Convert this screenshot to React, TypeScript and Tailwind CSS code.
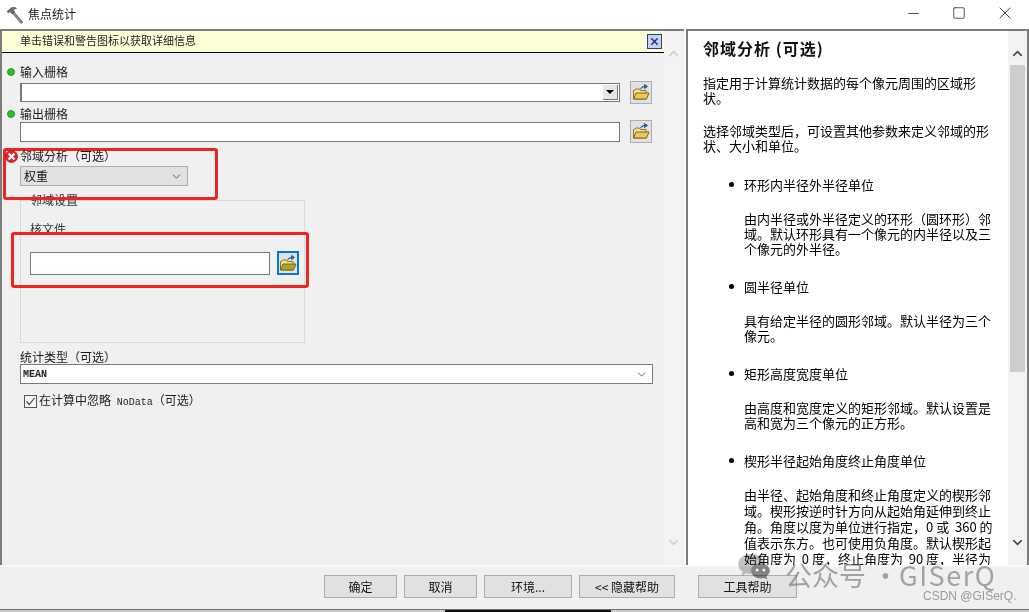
import { ChevronDown, ChevronUp, Minus, Square, X } from 'lucide-react';

const cjk = "font-['Noto_Sans_CJK_SC','Liberation_Sans',sans-serif]";

const Hammer = () => (
    <svg width="18" height="18" viewBox="0 0 18 18">
        <path d="M8 6l9 10-2 1.5L6.5 7.5z" fill="#8a8a8a" stroke="#555" strokeWidth="0.6" />
        <path d="M1 5.5L5.5 1.5h4l1 1-3 1 1 2.5-2.5 2L4 5.5l-1.5 1.5z" fill="#6d6d6d" stroke="#444" strokeWidth="0.5" />
    </svg>
);

const FolderIcon = ({ olive }: { olive?: boolean }) => (
    <svg width="18" height="17" viewBox="0 0 18 17">
        <path d="M1.5 15V6.5h1l1-1.5h4l1 1.5h5.5V15z" fill="#f7e08a" stroke="#7a6a1e" strokeWidth="0.9" />
        <path d="M1.5 15l2.5-6h13l-2.5 6z" fill={olive ? '#aea52c' : '#e9c95a'} stroke="#6b5c17" strokeWidth="0.9" />
        <path d="M8.5 5C9.5 3 11 2.5 13 2.5M12.5 0.5l3 2-3 2z" fill="#1f5fa8" stroke="#1f5fa8" strokeWidth="1" />
    </svg>
);

const FolderButton = ({ active }: { active?: boolean }) => (
    <button
        className={
            active
                ? 'w-[22px] h-[24px] flex items-center justify-center bg-[#e1e1e1] border-2 border-[#0078d7]'
                : 'w-[22px] h-[23px] flex items-center justify-center bg-[#e1e1e1] border border-[#adadad]'
        }
    >
        <FolderIcon olive={active} />
    </button>
);

const GreenDot = () => <span className="ml-[7px] block w-[8px] h-[8px] rounded-full bg-[#22c41e] border border-[#3d8f3a]" />;

const ErrorIcon = () => (
    <svg className="ml-[5px] relative z-[2]" width="13" height="13" viewBox="0 0 14 14">
        <circle cx="7" cy="7" r="6.6" fill="#e3222c" stroke="#8e1a1f" strokeWidth="0.6" />
        <path d="M3.800 3.800l6.400 6.400M10.200 3.800l-6.400 6.400" stroke="#fff" strokeWidth="2.400" />
    </svg>
);

const FieldLabel = ({ icon, children, className }: { icon?: React.ReactNode; children: React.ReactNode; className?: string }) => (
    <div className={`flex items-center h-[14px] text-[12px] leading-[14px] text-[#1a1a1a] ${className ?? ''}`}>
        <span className="w-[20px] shrink-0 flex items-center">{icon}</span>
        <span className="relative z-[1] whitespace-nowrap">{children}</span>
    </div>
);

const ScrollBar = ({ thumb, dark }: { thumb?: boolean; dark?: boolean }) => (
    <div className="w-[19px] shrink-0 h-full bg-[#f3f3f3] flex flex-col items-center">
        <div className="h-[34px] shrink-0 flex items-center justify-center pt-[10px]">
            <ChevronUp size={15} strokeWidth={2.6} className={dark ? 'text-[#4a4a4a]' : 'text-[#cfcfcf]'} />
        </div>
        {thumb && <div className="w-[15px] h-[307px] bg-[#cdcdcd]" />}
        <div className="grow" />
        <div className="h-[30px] shrink-0 flex items-start justify-center">
            <ChevronDown size={15} strokeWidth={2.6} className={dark ? 'text-[#4a4a4a]' : 'text-[#cfcfcf]'} />
        </div>
    </div>
);

const LeftPanel = () => (
    <div className="w-[684px] shrink-0 h-full flex border-l-2 border-t-2 border-[#7c7c7c] bg-[#f0f0f0]">
        <div className="w-[662px] shrink-0 h-full relative">
            <div className="h-[22px] flex items-center justify-between pl-[18px] pr-[2px] bg-[#fdfdd6] border-b border-black text-[11px] leading-[14px] text-[#222]">
                <span className="pb-[3px]">单击错误和警告图标以获取详细信息</span>
                <span className="w-[15px] h-[15px] flex items-center justify-center bg-[#c6d3f5] border border-[#2b3f8c]">
                    <X size={11} strokeWidth={3} className="text-[#1b2a70]" />
                </span>
            </div>
            <div className="pt-[12px] pr-[9px]">
                <FieldLabel icon={<GreenDot />} className="-ml-[2px]">输入栅格</FieldLabel>
                <div className="flex items-center mt-[2px] ml-[18px]">
                    <div className="w-[600px] h-[19px] bg-white border border-[#7a7a7a] border-l-2 flex justify-end items-center pr-[1px]">
                        <span className="w-[15px] h-[15px] bg-[#e6e6e6] border-r border-b border-[#777] flex items-center justify-center">
                            <span className="block w-0 h-0 border-l-[4px] border-r-[4px] border-t-[4px] border-l-transparent border-r-transparent border-t-black" />
                        </span>
                    </div>
                    <span className="ml-[10px]"><FolderButton /></span>
                </div>
                <FieldLabel icon={<GreenDot />} className="-ml-[2px] mt-[3px]">输出栅格</FieldLabel>
                <div className="flex items-center mt-[-1px] ml-[18px]">
                    <div className="w-[600px] h-[20px] bg-white border border-[#7a7a7a]" />
                    <span className="ml-[10px]"><FolderButton /></span>
                </div>
                <FieldLabel icon={<ErrorIcon />} className="-ml-[2px] mt-[6px]">邻域分析（可选）</FieldLabel>
                <div className="mt-[3px] ml-[18px] w-[168px] h-[20px] bg-[#e1e1e1] border border-[#adadad] flex items-center justify-between pl-[3px] pr-[4px] text-[12px] text-[#111]">
                    <span>权重</span>
                    <ChevronDown size={13} strokeWidth={1.5} className="text-[#444]" />
                </div>
                <div className="mt-[14px] ml-[18px] w-[285px] h-[143px] border border-[#d9d9d9] pl-[9px]">
                    <div className="-mt-[8px] text-[12px] leading-[14px] text-[#333]">邻域设置</div>
                    <div className="mt-[15px] text-[12px] leading-[14px] text-[#333]">核文件</div>
                    <div className="flex items-center mt-[15px]">
                        <div className="w-[240px] h-[23px] bg-white border border-[#7a7a7a]" />
                        <span className="ml-[7px]"><FolderButton active /></span>
                    </div>
                </div>
                <FieldLabel className="-ml-[2px] mt-[7px]">统计类型（可选）</FieldLabel>
                <div className="mt-[0px] ml-[18px] w-[633px] h-[20px] bg-white border border-[#7a7a7a] flex items-center justify-between pl-[2px] pr-[4px]">
                    <span className="font-['Liberation_Mono',monospace] font-bold text-[10px] text-[#222]">MEAN</span>
                    <ChevronDown size={13} strokeWidth={1.5} className="text-[#444]" />
                </div>
                <div className="flex items-center mt-[9px] ml-[22px] text-[12px] leading-[14px] text-[#222]">
                    <span className="w-[13px] h-[13px] bg-[#f5f5f5] border border-[#555] flex items-center justify-center">
                        <svg width="11" height="11" viewBox="0 0 11 11"><path d="M1.5 5.500l2.800 3 5.200-6.500" fill="none" stroke="#333" strokeWidth="1.1" /></svg>
                    </span>
                    <span className="ml-[2px] whitespace-nowrap">
                        在计算中忽略 <span className="ml-[3px] font-['Liberation_Mono',monospace] text-[10px]">NoData</span>（可选）
                    </span>
                </div>
            </div>
        </div>
        <ScrollBar />
    </div>
);

const Sub = ({ children, tight }: { children: React.ReactNode; tight?: boolean }) => (
    <p className={`ml-[41px] mt-[19px] mb-[23px] whitespace-nowrap ${tight ? 'leading-[16px]' : 'leading-[15px]'}`}>{children}</p>
);

const Bullet = ({ children }: { children: React.ReactNode }) => (
    <div className="flex items-center ml-[26px] leading-[15px]">
        <span className="w-[5px] h-[5px] rounded-full bg-black" />
        <span className="ml-[10px] whitespace-nowrap">{children}</span>
    </div>
);

const HelpPanel = () => (
    <div className="grow h-full flex border-l-2 border-t-2 border-[#7c7c7c] bg-white overflow-hidden">
        <div className="w-[320px] shrink-0 pl-[15px] pt-[7px] text-[13px] text-black">
            <h2 className="text-[16px] leading-[20px] font-bold tracking-[1px] text-[#111]">邻域分析 (可选)</h2>
            <p className="mt-[17px] leading-[15px] whitespace-nowrap">
                指定用于计算统计数据的每个像元周围的区域形<br />状。
            </p>
            <p className="mt-[18px] mb-[24px] leading-[15px] whitespace-nowrap">
                选择邻域类型后，可设置其他参数来定义邻域的形<br />状、大小和单位。
            </p>
            <Bullet>环形内半径外半径单位</Bullet>
            <Sub>
                由内半径或外半径定义的环形（圆环形）邻<br />域。默认环形具有一个像元的内半径以及三<br />个像元的外半径。
            </Sub>
            <Bullet>圆半径单位</Bullet>
            <Sub>
                具有给定半径的圆形邻域。默认半径为三个<br />像元。
            </Sub>
            <Bullet>矩形高度宽度单位</Bullet>
            <Sub>
                由高度和宽度定义的矩形邻域。默认设置是<br />高和宽为三个像元的正方形。
            </Sub>
            <Bullet>楔形半径起始角度终止角度单位</Bullet>
            <Sub tight>
                由半径、起始角度和终止角度定义的楔形邻<br />域。楔形按逆时针方向从起始角延伸到终止<br />角。角度以度为单位进行指定，0 或&nbsp;&nbsp;360 的<br />值表示东方。也可使用负角度。默认楔形起<br />始角度为&nbsp; 0 度，终止角度为&nbsp; 90 度，半径为
            </Sub>
        </div>
        <ScrollBar thumb dark />
    </div>
);

const Footer = () => (
    <div className="h-[44px] shrink-0 bg-[#f0f0f0] border-t-2 border-[#fafafa] pl-[324px] pt-[8px] flex items-start text-[12px] text-[#111]">
        <button className="w-[73px] h-[23px] bg-[#e1e1e1] border border-[#adadad]">确定</button>
        <button className="ml-[7px] w-[73px] h-[23px] bg-[#e1e1e1] border border-[#adadad]">取消</button>
        <button className="ml-[7px] w-[88px] h-[23px] bg-[#e1e1e1] border border-[#adadad]">环境...</button>
        <button className="ml-[7px] w-[96px] h-[23px] bg-[#e1e1e1] border border-[#adadad]">&lt;&lt; 隐藏帮助</button>
        <button className="ml-[23px] w-[99px] h-[23px] bg-[#e1e1e1] border border-[#adadad]">工具帮助</button>
    </div>
);

const Watermark = () => (
    <div className="absolute left-[735px] top-[552px] w-[290px] h-[56px] pointer-events-none">
        <svg className="absolute left-0 top-0 mix-blend-multiply" width="39" height="29" viewBox="0 0 40 34">
            <path d="M16 2C8 2 1 7 1 14c0 4 2 7 5 9l-1 5 5-3c2 .6 4 .8 6 .8C24 26 31 21 31 14S24 2 16 2z" fill="#c4c4c4" />
            <path d="M27 13c-6 0-11 4-11 9s5 9 11 9c1.500 0 3-.2 4-.7l4 2-1-4c2-1.600 4-3.800 4-6.300 0-5-5-9-11-9z" fill="#8a8a8a" />
            <circle cx="23" cy="21" r="1.800" fill="#fff" />
            <circle cx="31" cy="21" r="1.800" fill="#fff" />
        </svg>
        <span className="absolute left-[50px] top-[7px] text-[27px] leading-[32px] text-[#6e6e6e]/60 whitespace-nowrap">
            公众号 · <span className="-ml-[6px] tracking-[1.5px]">GISerQ</span>
        </span>
        <span className="absolute left-[188px] top-[37px] font-['Liberation_Sans',sans-serif] text-[12px] leading-[14px] text-[#9a9a9a] whitespace-nowrap">CSDN @GISerQ.</span>
    </div>
);

export default function App() {
    return (
        <div className={`relative w-[1029px] h-[612px] overflow-hidden flex flex-col bg-white ${cjk}`}>
            <div className="h-[29px] shrink-0 flex items-center bg-white">
                <span className="ml-[6px]"><Hammer /></span>
                <span className="ml-[4px] pb-[2px] text-[12px] text-[#222]">焦点统计</span>
                <div className="ml-auto pb-[3px] flex items-center text-[#222]">
                    <Minus size={17} strokeWidth={1.1} className="mr-[30px]" />
                    <Square size={14} strokeWidth={1.3} className="mr-[29px]" />
                    <X size={20} strokeWidth={1} className="mr-[14px]" />
                </div>
            </div>
            <div className="h-[536px] shrink-0 flex bg-white border-r-2 border-[#7c7c7c]">
                <LeftPanel />
                <div className="w-[2px] shrink-0 bg-[#f8f8f8]" />
                <HelpPanel />
            </div>
            <Footer />
            <div className="grow flex border-t border-[#707070]">
                <div className="w-[445px] bg-[#c9c9c9]" />
                <div className="w-[166px] bg-[#111]" />
                <div className="grow bg-[#c9c9c9]" />
            </div>
            <div className="absolute left-[3px] top-[148px] w-[215px] h-[52px] border-[3px] border-[#f0241c] rounded-[3px] pointer-events-none" />
            <div className="absolute left-[11px] top-[232px] w-[298px] h-[56px] border-[3px] border-[#f0241c] rounded-[3px] pointer-events-none" />
            <Watermark />
        </div>
    );
}
